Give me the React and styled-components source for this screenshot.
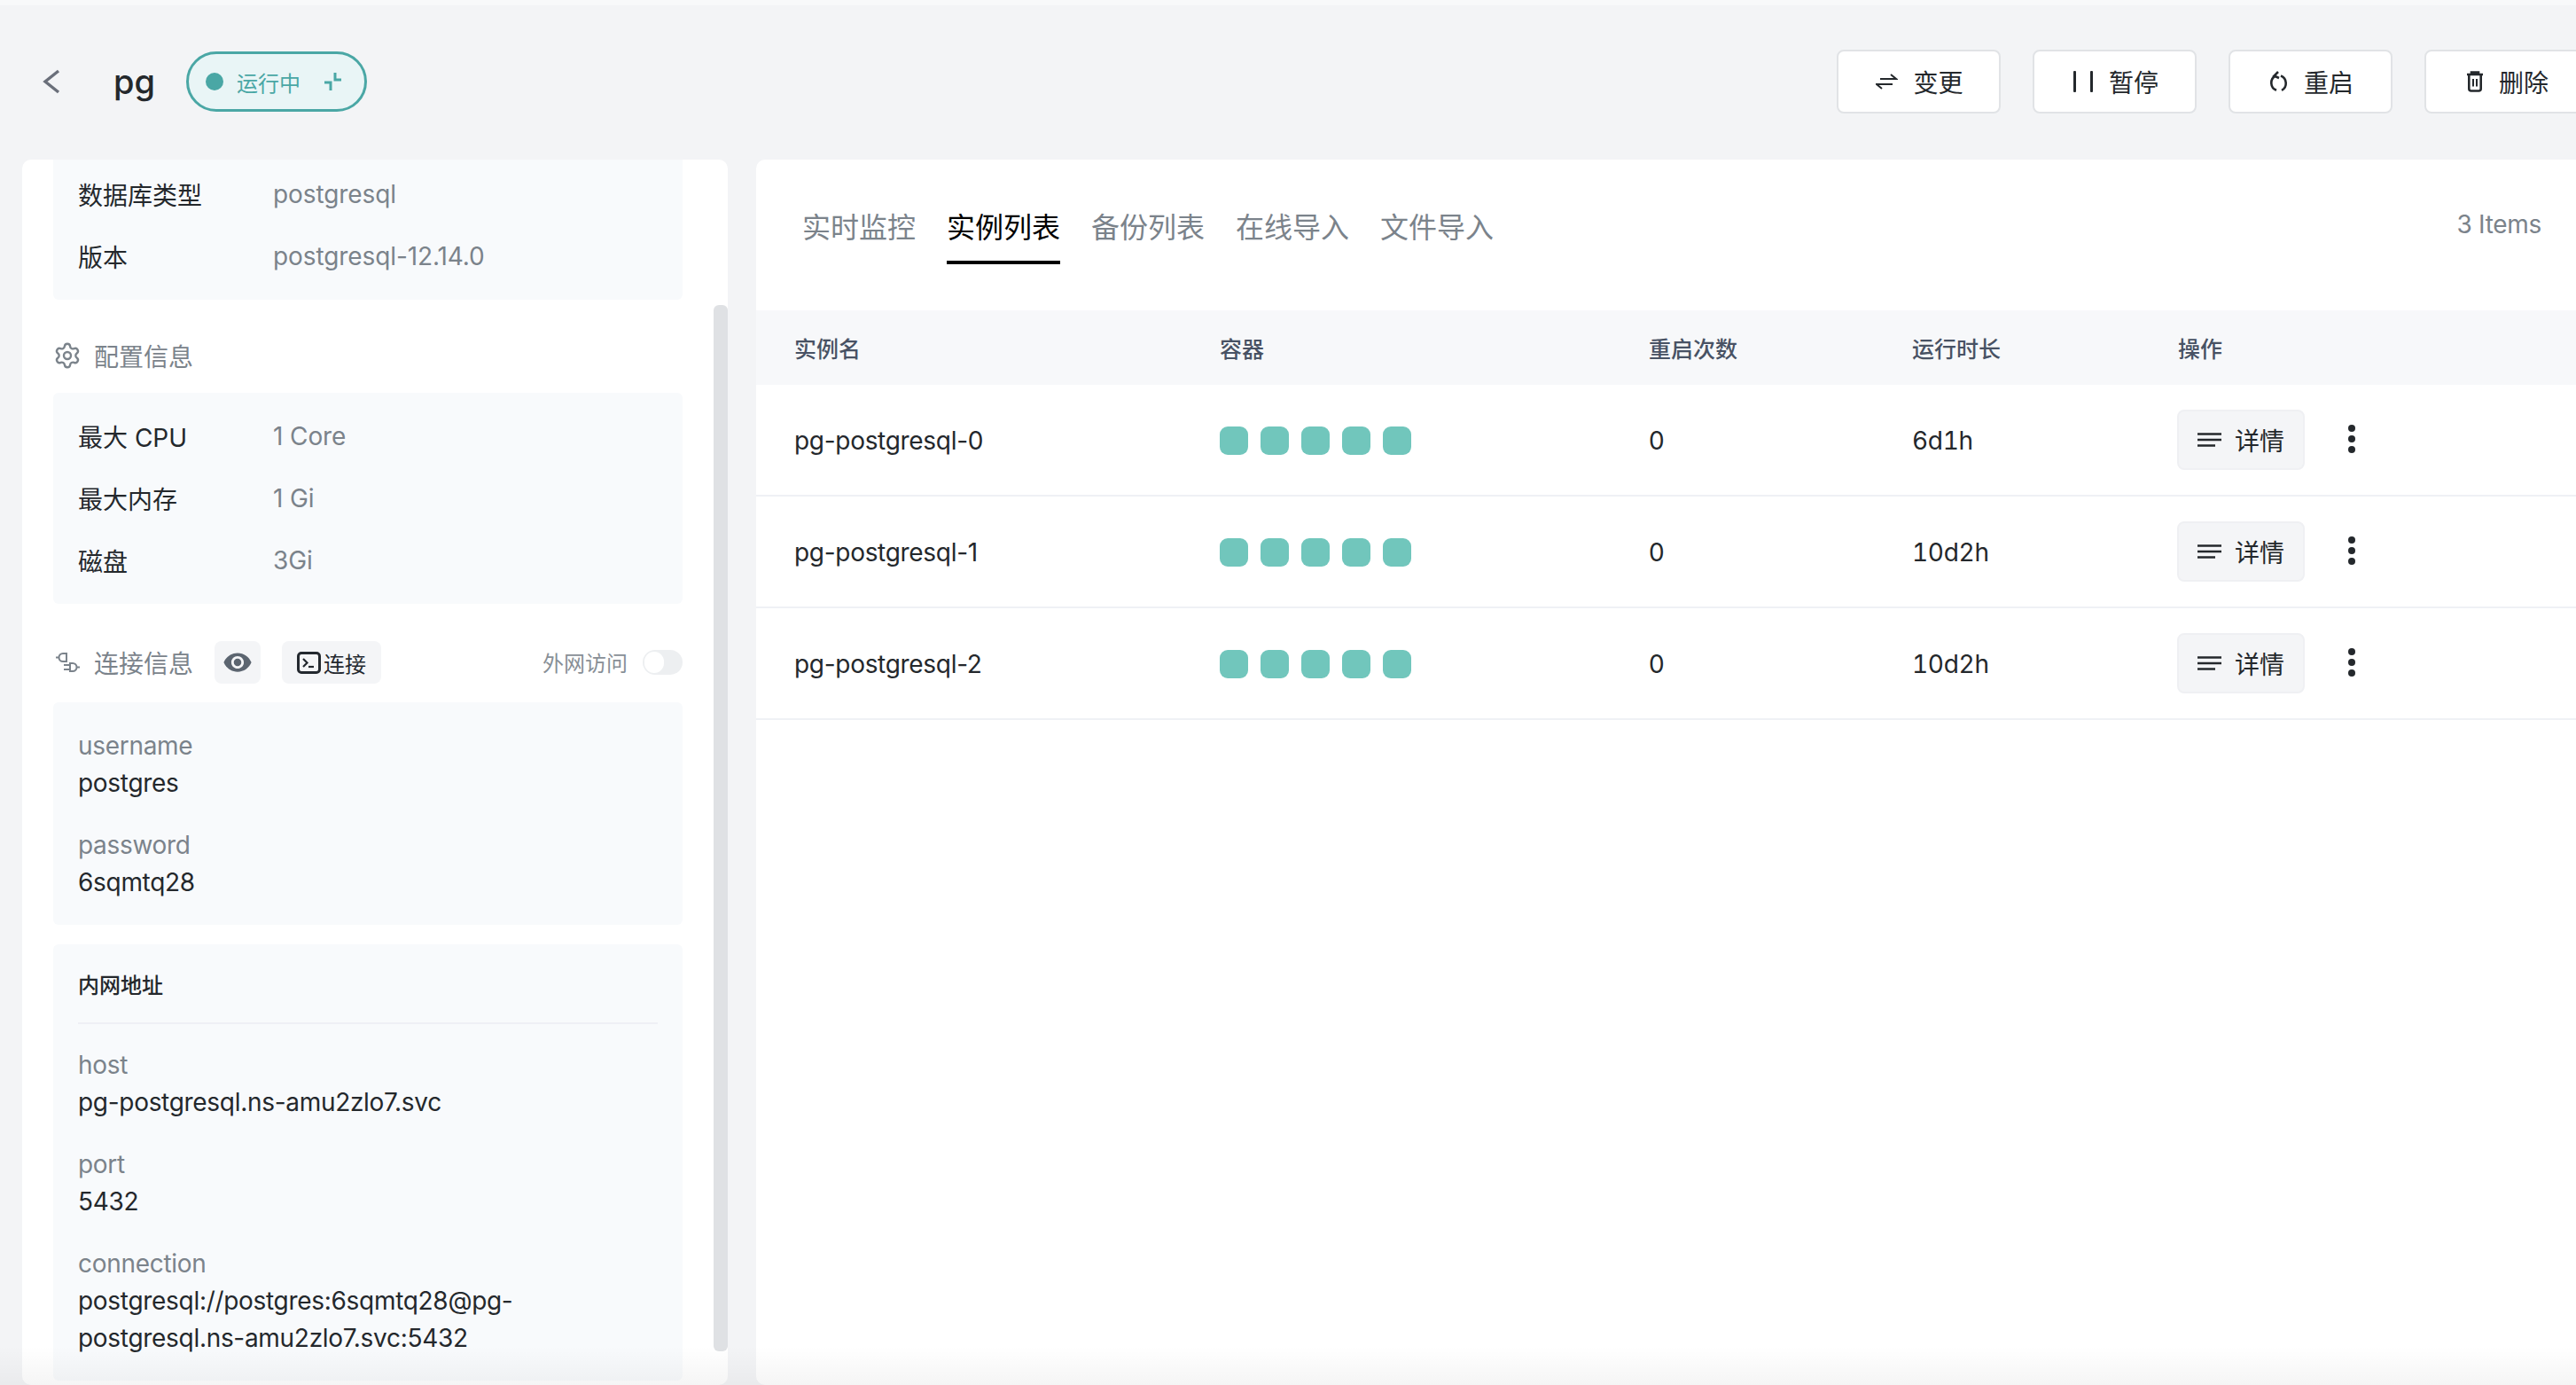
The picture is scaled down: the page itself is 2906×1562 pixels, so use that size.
import React from "react";
import styled, { createGlobalStyle } from "styled-components";
import { Settings } from "lucide-react";
import { MdVisibility } from "react-icons/md";

const GlobalStyle = createGlobalStyle`
  html, body {
    margin: 0;
    padding: 0;
    background: #f3f4f6;
  }
  body {
    font-family: Inter, "Noto Sans CJK SC", sans-serif;
    color: #24282c;
  }
`;

const Page = styled.div`
  position: relative;
  width: 2906px;
  height: 1562px;
  overflow: hidden;
  background: #f3f4f6;
`;

const TopStrip = styled.div`
  height: 6px;
  background: #f8f9fa;
`;

const Header = styled.header`
  display: flex;
  align-items: center;
  width: 2920px;
  height: 174px;
  padding: 0 0 2px 48px;
  box-sizing: border-box;
`;

const BackIcon = styled.svg`
  width: 20px;
  height: 28px;
  margin-right: 60px;
  flex-shrink: 0;
`;

const Title = styled.h1`
  margin: 0 35px 0 0;
  font-size: 38px;
  line-height: 44px;
  font-weight: 500;
  color: #24282c;
`;

const StatusBadge = styled.div`
  display: flex;
  align-items: center;
  width: 204px;
  height: 68px;
  padding-left: 19px;
  box-sizing: border-box;
  border: 3px solid #4aa7a5;
  border-radius: 34px;
  background: #e9f5f6;
  color: #4aa7a5;
  font-size: 24px;
`;

const StatusDot = styled.span`
  width: 20px;
  height: 20px;
  margin-right: 15px;
  border-radius: 50%;
  background: #4aa7a5;
`;

const StatusIcon = styled.svg`
  width: 22px;
  height: 22px;
  margin-left: 26px;
`;

const Actions = styled.div`
  display: flex;
  gap: 36px;
  margin-left: auto;
`;

const ActionButton = styled.button`
  display: flex;
  align-items: center;
  justify-content: center;
  gap: 17px;
  width: 185px;
  height: 72px;
  padding: 0 0 0 2px;
  box-sizing: border-box;
  border: 2px solid #e1e3e6;
  border-radius: 8px;
  background: #fff;
  color: #24282c;
  font-family: inherit;
  font-size: 28px;
`;

const Body = styled.main`
  display: flex;
  gap: 32px;
  height: 1382px;
  padding-left: 25px;
`;

const LeftPanel = styled.aside`
  position: relative;
  flex: 0 0 796px;
  padding: 0 51px 0 35px;
  box-sizing: border-box;
  overflow: hidden;
  border-radius: 10px;
  background: #fff;
`;

const ScrollThumb = styled.div`
  position: absolute;
  top: 164px;
  right: 0;
  width: 16px;
  height: 1180px;
  border-radius: 6px;
  background: #dfe1e4;
`;

const InfoBox = styled.section`
  padding: 14px 0 14px 28px;
  border-radius: 6px;
  background: #f8fafc;

  &:first-child {
    margin-top: -10px;
  }
`;

const InfoRow = styled.div`
  display: flex;
  align-items: center;
  height: 70px;
  font-size: 28px;
`;

const InfoLabel = styled.span`
  width: 220px;
  color: #24282c;
`;

const InfoValue = styled.span`
  color: #7b838b;
  letter-spacing: -0.1px;
`;

const SectionTitle = styled.div`
  display: flex;
  align-items: center;
  height: ${(p) => (p.$tall ? "48px" : "36px")};
  padding: ${(p) => (p.$tall ? "42px 0 21px" : "45px 0 24px")};
  color: #7b838b;
  font-size: 28px;
`;

const TitleIcon = styled.span`
  display: flex;
  width: 28px;
  margin: 0 16px 0 2px;
  color: #7b838b;

  .gear {
    margin: -2px;
    flex-shrink: 0;
  }
`;

const GhostButton = styled.button`
  display: flex;
  align-items: center;
  justify-content: center;
  gap: 3px;
  height: 48px;
  padding: 0;
  border: none;
  border-radius: 8px;
  background: #f4f5f7;
  color: #24292f;
  font-family: inherit;
  font-size: 24px;
`;

const EyeButton = styled(GhostButton)`
  width: 52px;
  margin-left: 24px;
  color: #5c6570;
`;

const ConnectButton = styled(GhostButton)`
  width: 112px;
  margin-left: 24px;
`;

const NetLabel = styled.span`
  margin-left: auto;
  margin-right: 17px;
  padding-bottom: 2px;
  color: #888f96;
  font-size: 24px;
`;

const Switch = styled.span`
  display: flex;
  align-items: center;
  width: 45px;
  height: 28px;
  padding-left: 2px;
  box-sizing: border-box;
  border-radius: 14px;
  background: #edeff1;

  &::before {
    content: "";
    width: 22px;
    height: 24px;
    border-radius: 12px;
    background: #fff;
  }
`;

const FieldBox = styled.section`
  margin-bottom: 22px;
  padding: ${(p) => (p.$titled ? "27px 28px 27px 28px" : "28px 28px 27px 28px")};
  border-radius: 6px;
  background: #f8fafc;
`;

const FieldTitle = styled.div`
  height: 40px;
  margin-bottom: 25px;
  padding-bottom: 21px;
  border-bottom: 2px solid #eff0f5;
  font-size: 24px;
  line-height: 40px;
  font-weight: 500;
`;

const Field = styled.div`
  font-size: 28px;
  line-height: 42px;
  letter-spacing: -0.3px;

  & + & {
    margin-top: 28px;
  }
`;

const FieldLabel = styled.div`
  color: #7b838b;
`;

const FieldValue = styled.div`
  color: #24282c;
`;

const RightPanel = styled.section`
  flex: 1;
  min-width: 0;
  border-radius: 10px 0 0 10px;
  background: #fff;
`;

const TabBar = styled.div`
  display: flex;
  justify-content: space-between;
  align-items: flex-start;
  height: 113px;
  padding: 57px 39px 0 52px;
`;

const Tabs = styled.nav`
  display: flex;
  gap: 35px;
`;

const Tab = styled.a`
  padding-bottom: 17px;
  border-bottom: 4px solid ${(p) => (p.$active ? "#000" : "transparent")};
  color: ${(p) => (p.$active ? "#000" : "#7b838b")};
  font-size: 32px;
  line-height: 40px;
`;

const ItemCount = styled.span`
  color: #7b838b;
  font-size: 28px;
  line-height: 32px;
  letter-spacing: -0.3px;
`;

const TableRow = styled.div`
  display: grid;
  grid-template-columns: 480px 484px 297px 300px 1fr;
  align-items: center;
  padding-left: 43px;
`;

const TableHead = styled(TableRow)`
  height: 84px;
  background: #f7f8fa;
  color: #485264;
  font-size: 25px;
  font-weight: 500;
`;

const TableBodyRow = styled(TableRow)`
  height: 123px;
  padding-top: 1px;
  border-bottom: 2px solid #eff1f5;
  font-size: 28px;
  letter-spacing: -0.3px;
`;

const AgeCell = styled.span`
  font-variant-numeric: tabular-nums;
`;

const Containers = styled.div`
  display: flex;
  gap: 14px;
`;

const ContainerDot = styled.span`
  width: 32px;
  height: 32px;
  border-radius: 9px;
  background: #71c6bc;
`;

const ActionCell = styled.div`
  display: flex;
  align-items: center;
`;

const DetailButton = styled.button`
  display: flex;
  align-items: center;
  justify-content: center;
  gap: 15px;
  width: 144px;
  height: 68px;
  margin: -2px 0 0 -1px;
  padding: 0;
  box-sizing: border-box;
  border: 2px solid #eff0f3;
  border-radius: 8px;
  background: #f4f5f7;
  color: #24282c;
  font-family: inherit;
  font-size: 28px;
`;

const MoreIcon = styled.svg`
  width: 32px;
  height: 32px;
  margin: -4px 0 0 37px;
`;

const BottomFade = styled.div`
  position: absolute;
  left: 0;
  right: 0;
  bottom: 0;
  height: 44px;
  background: linear-gradient(rgba(0, 0, 0, 0), rgba(0, 0, 0, 0.04));
  pointer-events: none;
`;

const SwapIcon = () => (
  <svg width="25" height="18" viewBox="0 0 25 18" fill="none" stroke="#24282c" strokeWidth="2">
    <path d="M5 6H23L17 1" />
    <path d="M19 12H1L7 17" />
  </svg>
);

const PauseIcon = () => (
  <svg width="24" height="24" viewBox="0 0 24 24" fill="#24282c">
    <rect x="1" y="0" width="3" height="24" rx="1" />
    <rect x="20" y="0" width="3" height="24" rx="1" />
  </svg>
);

const RestartIcon = () => (
  <svg width="22" height="24" viewBox="0 0 22 24" fill="none" stroke="#24282c" strokeWidth="2.6">
    <path d="M7 5.5A9 9 0 0 0 8 21.8" />
    <path d="M14 21.8A9 9 0 0 0 13 5.5" />
    <path d="M10 1L5.5 5.5L11 8" />
  </svg>
);

const TrashIcon = () => (
  <svg width="20" height="24" viewBox="0 0 20 24" fill="none" stroke="#24282c" strokeWidth="2.6">
    <path d="M1 4H19M6 4V1.5H14V4" />
    <path d="M3.3 4V20a2.5 2.5 0 0 0 2.5 2.5H14.2a2.5 2.5 0 0 0 2.5-2.5V4" />
    <path d="M8 9V17.5M12 9V17.5" strokeWidth="2" />
  </svg>
);

const PlugIcon = () => (
  <svg width="28" height="22" viewBox="0 0 28 22" fill="none" stroke="#7b838b" strokeWidth="2">
    <path d="M13 1H9a4.5 4.5 0 0 0 0 9H13Z" />
    <path d="M1 5.5H4.5" />
    <path d="M17 12h3a4.5 4.5 0 0 1 0 9H17Z" />
    <path d="M24.5 16.5H28M10 14H17M10 19H17" />
  </svg>
);

const TerminalIcon = () => (
  <svg width="27" height="25" viewBox="0 0 27 25" fill="none" stroke="#24292f">
    <rect x="1.5" y="1.5" width="24" height="22" rx="3.5" strokeWidth="3" />
    <path d="M7 8L11.5 12.5L7 17" strokeWidth="2.2" />
    <path d="M13 17H19" strokeWidth="2.2" />
  </svg>
);

const DetailIcon = () => (
  <svg width="27" height="16" viewBox="0 0 27 16" fill="none" stroke="#24282c" strokeWidth="2.6">
    <path d="M0 1.5H27M0 8H27M0 14.5H20" />
  </svg>
);

const rows = [
  { name: "pg-postgresql-0", restarts: 0, age: "6d1h" },
  { name: "pg-postgresql-1", restarts: 0, age: "10d2h" },
  { name: "pg-postgresql-2", restarts: 0, age: "10d2h" },
];

const tabs = ["实时监控", "实例列表", "备份列表", "在线导入", "文件导入"];

export default function App() {
  return (
    <Page>
      <GlobalStyle />
      <TopStrip />
      <Header>
        <BackIcon viewBox="0 0 20 28" fill="none" stroke="#6a6f7a" strokeWidth="3.4">
          <path d="M18 2L3 14L18 26" />
        </BackIcon>
        <Title>pg</Title>
        <StatusBadge>
          <StatusDot />
          运行中
          <StatusIcon viewBox="0 0 22 22" fill="none" stroke="#4aa7a5" strokeWidth="3">
            <path d="M1 12H8V21" />
            <path d="M13 1V9H20" />
          </StatusIcon>
        </StatusBadge>
        <Actions>
          <ActionButton><SwapIcon />变更</ActionButton>
          <ActionButton><PauseIcon />暂停</ActionButton>
          <ActionButton><RestartIcon />重启</ActionButton>
          <ActionButton><TrashIcon />删除</ActionButton>
        </Actions>
      </Header>
      <Body>
        <LeftPanel>
          <InfoBox>
            <InfoRow><InfoLabel>数据库类型</InfoLabel><InfoValue>postgresql</InfoValue></InfoRow>
            <InfoRow><InfoLabel>版本</InfoLabel><InfoValue>postgresql-12.14.0</InfoValue></InfoRow>
          </InfoBox>
          <SectionTitle>
            <TitleIcon><Settings className="gear" size={32} strokeWidth={1.8} /></TitleIcon>
            配置信息
          </SectionTitle>
          <InfoBox>
            <InfoRow><InfoLabel>最大 CPU</InfoLabel><InfoValue>1 Core</InfoValue></InfoRow>
            <InfoRow><InfoLabel>最大内存</InfoLabel><InfoValue>1 Gi</InfoValue></InfoRow>
            <InfoRow><InfoLabel>磁盘</InfoLabel><InfoValue>3Gi</InfoValue></InfoRow>
          </InfoBox>
          <SectionTitle $tall>
            <TitleIcon><PlugIcon /></TitleIcon>
            连接信息
            <EyeButton><MdVisibility size={34} /></EyeButton>
            <ConnectButton><TerminalIcon />连接</ConnectButton>
            <NetLabel>外网访问</NetLabel>
            <Switch />
          </SectionTitle>
          <FieldBox>
            <Field><FieldLabel>username</FieldLabel><FieldValue>postgres</FieldValue></Field>
            <Field><FieldLabel>password</FieldLabel><FieldValue>6sqmtq28</FieldValue></Field>
          </FieldBox>
          <FieldBox $titled>
            <FieldTitle>内网地址</FieldTitle>
            <Field><FieldLabel>host</FieldLabel><FieldValue>pg-postgresql.ns-amu2zlo7.svc</FieldValue></Field>
            <Field><FieldLabel>port</FieldLabel><FieldValue>5432</FieldValue></Field>
            <Field>
              <FieldLabel>connection</FieldLabel>
              <FieldValue>postgresql://postgres:6sqmtq28@pg-postgresql.ns-amu2zlo7.svc:5432</FieldValue>
            </Field>
          </FieldBox>
          <ScrollThumb />
        </LeftPanel>
        <RightPanel>
          <TabBar>
            <Tabs>
              {tabs.map((t) => (
                <Tab key={t} $active={t === "实例列表"}>{t}</Tab>
              ))}
            </Tabs>
            <ItemCount>3 Items</ItemCount>
          </TabBar>
          <TableHead>
            <span>实例名</span>
            <span>容器</span>
            <span>重启次数</span>
            <span>运行时长</span>
            <span>操作</span>
          </TableHead>
          {rows.map((r) => (
            <TableBodyRow key={r.name}>
              <span>{r.name}</span>
              <Containers>
                {[0, 1, 2, 3, 4].map((i) => <ContainerDot key={i} />)}
              </Containers>
              <span>{r.restarts}</span>
              <AgeCell>{r.age}</AgeCell>
              <ActionCell>
                <DetailButton><DetailIcon />详情</DetailButton>
                <MoreIcon viewBox="0 0 32 32" fill="#24282c">
                  <circle cx="16" cy="4" r="4" />
                  <circle cx="16" cy="16" r="4" />
                  <circle cx="16" cy="28" r="4" />
                </MoreIcon>
              </ActionCell>
            </TableBodyRow>
          ))}
        </RightPanel>
      </Body>
      <BottomFade />
    </Page>
  );
}
